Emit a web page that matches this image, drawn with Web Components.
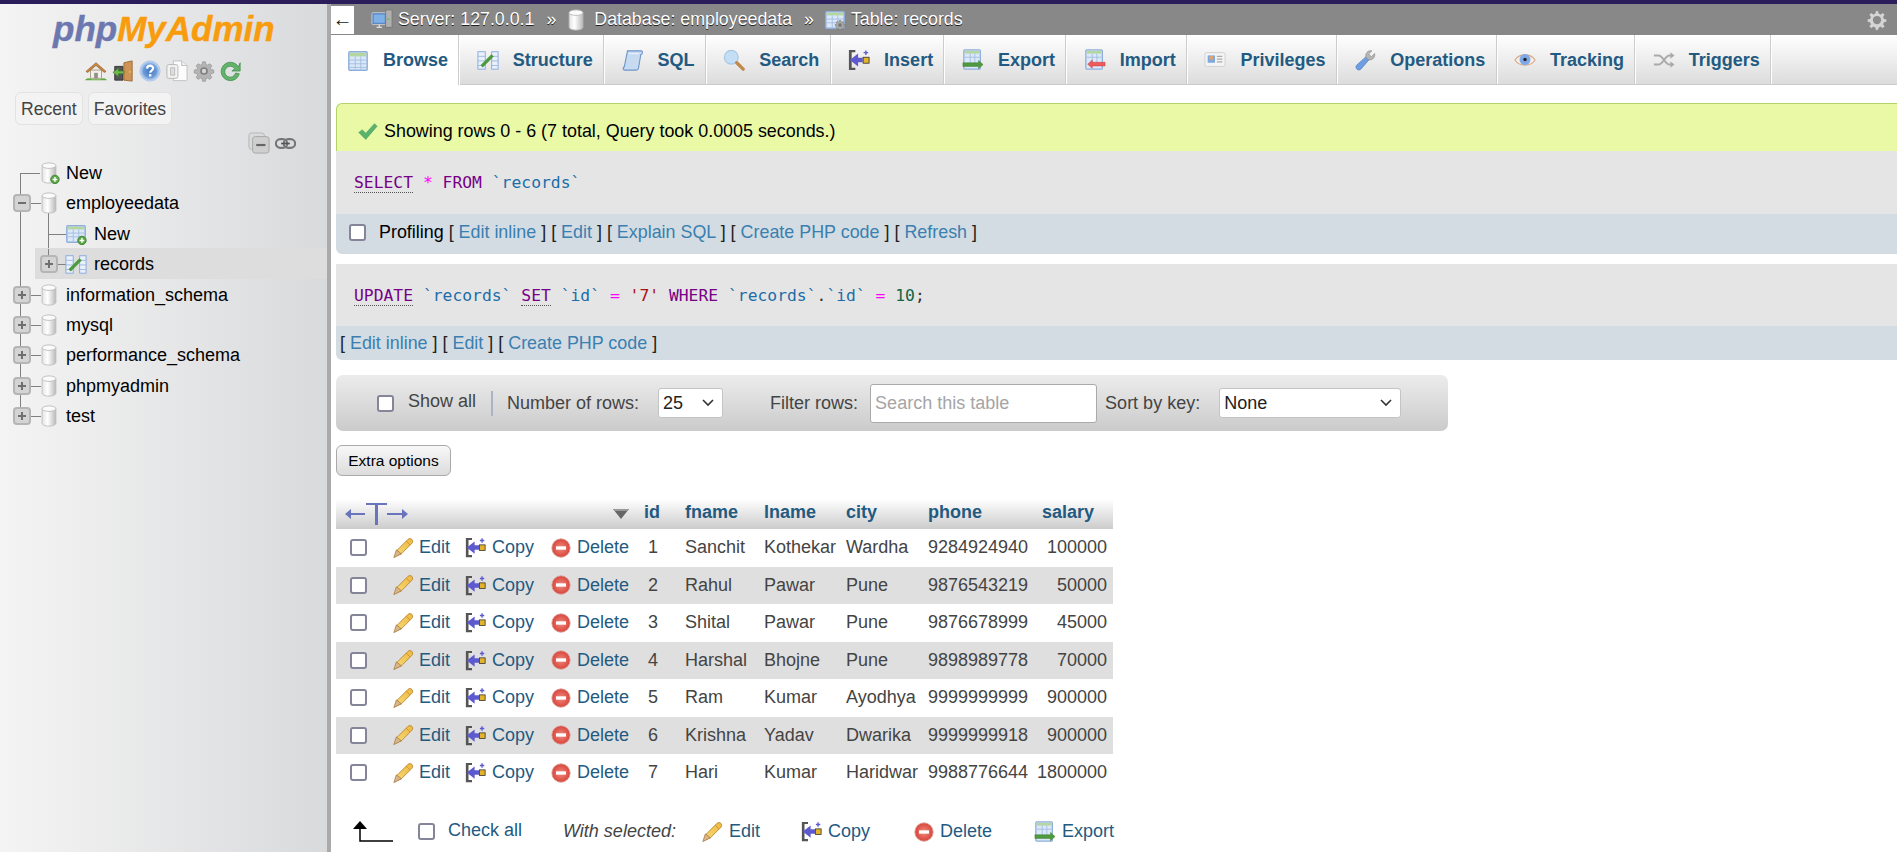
<!DOCTYPE html>
<html>
<head>
<meta charset="utf-8">
<title>phpMyAdmin</title>
<style>
  html, body { margin: 0; padding: 0; background: #fff; font: 18px "Liberation Sans", Arial, sans-serif; overflow: hidden; }
  .kw { color: #770088; }
  .kw.doc { border-bottom: 1px dotted #555; }
  .op { color: #ff00ff; }
  .id { color: #1b6da8; }
  .str { color: #aa1111; }
  .num { color: #116644; }
  .dk { color: #333; }
  .b { color: #222; }
  a { color: #3a7fb0; text-decoration: none; }
</style>
</head>
<body>
<pma-app>
  <pma-sidebar slot="sidebar">
    <pma-tree-item line="first" icon="dbnew">New</pma-tree-item>
    <pma-tree-item line="mid" expander="minus" icon="db" trunk="start">employeedata</pma-tree-item>
    <pma-tree-item line="mid" level="1" icon="tablenew" sub="mid">New</pma-tree-item>
    <pma-tree-item line="mid" level="1" expander="plus" icon="structure" sub="last" active>records</pma-tree-item>
    <pma-tree-item line="mid" expander="plus" icon="db">information_schema</pma-tree-item>
    <pma-tree-item line="mid" expander="plus" icon="db">mysql</pma-tree-item>
    <pma-tree-item line="mid" expander="plus" icon="db">performance_schema</pma-tree-item>
    <pma-tree-item line="mid" expander="plus" icon="db">phpmyadmin</pma-tree-item>
    <pma-tree-item line="last" expander="plus" icon="db">test</pma-tree-item>
  </pma-sidebar>
  <div slot="main">
    <pma-breadcrumb></pma-breadcrumb>
    <pma-tabs>
      <pma-tab icon="browse" active>Browse</pma-tab>
      <pma-tab icon="structure">Structure</pma-tab>
      <pma-tab icon="sql">SQL</pma-tab>
      <pma-tab icon="search">Search</pma-tab>
      <pma-tab icon="insert">Insert</pma-tab>
      <pma-tab icon="export">Export</pma-tab>
      <pma-tab icon="import">Import</pma-tab>
      <pma-tab icon="privs">Privileges</pma-tab>
      <pma-tab icon="ops">Operations</pma-tab>
      <pma-tab icon="eye">Tracking</pma-tab>
      <pma-tab icon="triggers">Triggers</pma-tab>
    </pma-tabs>
    <pma-message>Showing rows 0 - 6 (7 total, Query took 0.0005 seconds.)</pma-message>
    <pma-sql-box height="63" toolsheight="40" pad="13" lift="4">
      <span><span class="kw doc">SELECT</span> <span class="op">*</span> <span class="kw">FROM</span> <span class="id">`records`</span></span>
      <span slot="tools"><pma-check></pma-check><span style="margin-left:13px">Profiling</span> <span class="b">[</span> <a href="#">Edit inline</a> <span class="b">]</span> <span class="b">[</span> <a href="#">Edit</a> <span class="b">]</span> <span class="b">[</span> <a href="#">Explain SQL</a> <span class="b">]</span> <span class="b">[</span> <a href="#">Create PHP code</a> <span class="b">]</span> <span class="b">[</span> <a href="#">Refresh</a> <span class="b">]</span></span>
    </pma-sql-box>
    <pma-sql-box height="62" toolsheight="34" pad="4" style="margin-top:10px">
      <span><span class="kw doc">UPDATE</span> <span class="id">`records`</span> <span class="kw doc">SET</span> <span class="id">`id`</span> <span class="op">=</span> <span class="str">'7'</span> <span class="kw">WHERE</span> <span class="id">`records`</span><span class="dk">.</span><span class="id">`id`</span> <span class="op">=</span> <span class="num">10</span><span class="dk">;</span></span>
      <span slot="tools"><span class="b">[</span> <a href="#">Edit inline</a> <span class="b">]</span> <span class="b">[</span> <a href="#">Edit</a> <span class="b">]</span> <span class="b">[</span> <a href="#">Create PHP code</a> <span class="b">]</span></span>
    </pma-sql-box>
    <pma-nav-bar></pma-nav-bar>
    <pma-extra-button>Extra options</pma-extra-button>
    <pma-results></pma-results>
    <pma-bulk></pma-bulk>
  </div>
</pma-app>

<script>
// icon drawings, all on a 24 box
const DEFS = `<defs>
  <linearGradient id="cyl"><stop offset="0" stop-color="#e4e4e4"/><stop offset=".4" stop-color="#fff"/><stop offset="1" stop-color="#b9b9b9"/></linearGradient>
  <radialGradient id="red"><stop offset="0" stop-color="#f08a80"/><stop offset="1" stop-color="#d8453a"/></radialGradient>
  <radialGradient id="hlp"><stop offset="0" stop-color="#3e74bf"/><stop offset=".65" stop-color="#6c9bd8"/><stop offset="1" stop-color="#cfe0f4"/></radialGradient>
  <linearGradient id="pen" x1="0" y1="1" x2="1" y2="0"><stop offset="0" stop-color="#f7dc7a"/><stop offset="1" stop-color="#eeb73f"/></linearGradient>
</defs>`;
const cyl = `<path d="M4.5 4v16c0 1.600 3.400 3 7.500 3s7.500-1.400 7.500-3V4z" fill="url(#cyl)" stroke="#bcbcbc"/><ellipse cx="12" cy="4" rx="7.500" ry="3" fill="#fbfbfb" stroke="#bcbcbc"/>`;
const plus = `<circle cx="18.500" cy="19" r="4.600" fill="#5aa845" stroke="#3f7f2f"/><path d="M18.500 16.400v5.200M15.900 19h5.200" stroke="#fff" stroke-width="1.600"/>`;
const grid = `<rect x="2" y="3" width="20" height="18" rx="1" fill="#dbe8f8" stroke="#8eaedb" stroke-width="1.600"/><rect x="3" y="4" width="18" height="3" fill="#b4d6a0"/><path d="M3 11h18M3 15h18M9 7v14M15 7v14" stroke="#a3bde0"/>`;
const cogPath = `M10.400 2h3.200l.5 2.800 1.900.8 2.300-1.600 2.300 2.300-1.600 2.300.8 1.900 2.800.5v3.200l-2.800.5-.8 1.900 1.600 2.300-2.300 2.300-2.300-1.600-1.900.8-.5 2.800h-3.200l-.5-2.800-1.900-.8-2.300 1.600-2.300-2.300 1.600-2.300-.8-1.900-2.800-.5v-3.200l2.800-.5.8-1.900-1.600-2.300 2.300-2.300 2.300 1.600 1.900-.8z`;
const ICONS = {
  home: `<path d="M6 11h12v9H6z" fill="#f5f0e6" stroke="#a89880"/><rect x="10" y="14" width="4" height="6" fill="#8f8f8f"/><path d="M1 12.500 12 3l11 9.500-2 1L12 6 3 13.500z" fill="#c98a45" stroke="#8e5a22" stroke-width=".7"/><path d="M0 22c2-2.500 5-2.500 7-1h10c2-1.500 5-1.500 7 1z" fill="#5cab3f"/>`,
  exit: `<path d="M3 7h9v15H3z" fill="#555" stroke="#333"/><path d="M13 3l9-2v22l-9-1z" fill="#cf9455" stroke="#9a6a33"/><path d="M1 13.500 7 9v3h6v3H7v3z" fill="#6dbb4a" stroke="#3f7f2f" stroke-width=".7"/><circle cx="19.500" cy="13" r=".9" fill="#f5d040"/>`,
  help: `<circle cx="12" cy="12" r="11" fill="url(#hlp)" stroke="#aac4e6"/><path d="M8.800 9.400c.2-4.200 6.600-4.200 6.600-.3 0 2.400-3.200 2.400-3.200 4.800" fill="none" stroke="#fff" stroke-width="2.400"/><rect x="10.900" y="15.400" width="2.600" height="2.600" fill="#fff"/>`,
  docs: `<path d="M8 1h9l6 5v15a1.500 1.500 0 0 1-1.500 1.500H8z" fill="#fcfcfc" stroke="#bdbdbd"/><path d="M17 1v5h6" fill="#eee" stroke="#bdbdbd"/><rect x="1" y="5" width="12" height="15" rx="2" fill="#f2f2f2" stroke="#b5b5b5"/><rect x="5" y="8.500" width="4.500" height="8" fill="#ddd" stroke="#bbb"/>`,
  gear: `<path d="${cogPath}" fill="#b4b4b4" stroke="#8e8e8e" stroke-width=".7"/><circle cx="12" cy="12" r="4.200" fill="#7f7f7f"/><circle cx="12" cy="12" r="2.400" fill="#d6d6d6"/>`,
  gearw: `<path d="${cogPath}" fill="#d4d4d4" stroke="#777" stroke-width=".5"/><circle cx="12" cy="12" r="4.500" fill="#8a8a8a"/>`,
  reload: `<path d="M20 7.500A10 10 0 1 0 21 15l-4-.8a6 6 0 1 1-.8-4.700L13 12h9V3z" fill="#63b36a" stroke="#3c8a48" stroke-width=".8"/>`,
  collapse: `<rect x="1" y="1" width="17" height="18" rx="3" fill="#dadada" stroke="#b5b5b5"/><rect x="5" y="5" width="18" height="18" rx="3" fill="#cfcfcf" stroke="#a5a5a5"/><rect x="9" y="13" width="10" height="2.400" fill="#666"/>`,
  link: `<rect x="1" y="7" width="13" height="10" rx="5" fill="none" stroke="#777" stroke-width="2.400"/><rect x="10" y="7" width="13" height="10" rx="5" fill="none" stroke="#777" stroke-width="2.400"/><rect x="7" y="11" width="10" height="2" fill="#555"/>`,
  db: cyl,
  dbnew: cyl + plus,
  tablenew: grid + plus,
  browse: `<rect x="2" y="2" width="20" height="20" rx="1" fill="#dbe8f8" stroke="#8eaedb" stroke-width="1.600"/><rect x="3" y="3" width="18" height="4" fill="#b4d6a0"/><path d="M3 11h18M3 15h18M3 19h18M9 7v14M15 7v14" stroke="#a3bde0"/>`,
  structure: `<rect x="1" y="3" width="8" height="19" fill="#eaf1fb" stroke="#86a8dc"/><rect x="16" y="3" width="7" height="19" fill="#eaf1fb" stroke="#86a8dc"/><path d="M1 8h8M1 13h8M1 18h8M16 8h7M16 13h7M16 18h7" stroke="#9cb8e2"/><path d="M5 19 17 7" stroke="#4d9a3c" stroke-width="3.600"/>`,
  sql: `<path d="M6 2h15c1.800 0 1.800 4-.5 4l-2.500 15c-.3 1.500-1 2-2.500 2H3c-2 0-2.500-3-.5-3.500z" fill="#c6daf2" stroke="#6f94c9" stroke-width="1.200"/><path d="M7.500 5h11" stroke="#eaf2fb" stroke-width="1.200"/>`,
  search: `<circle cx="9" cy="9" r="7.500" fill="#c4def5" stroke="#a9c8e4" stroke-width="1.400"/><path d="M15 15l7 7" stroke="#c08a4c" stroke-width="3.600" stroke-linecap="round"/>`,
  insert: `<path d="M1 1h7v2.500H4v17h4V23H1z" fill="#555"/><path d="M2 12 11 5v4.500h5v5h-5V19z" fill="#5d5ad0"/><rect x="16.500" y="9" width="6.500" height="6.500" fill="#e3b32a" stroke="#333" stroke-width=".9"/><path d="M19.500 1.500v5M17 4h5" stroke="#5d5ad0" stroke-width="1.500"/>`,
  export: `<rect x="2" y="1" width="18" height="21" rx="1" fill="#dbe8f8" stroke="#8eaedb" stroke-width="1.400"/><rect x="3" y="2" width="16" height="3" fill="#b4d6a0"/><path d="M3 9h16M9 5v12M14 5v12" stroke="#a3bde0"/><path d="M1 15h17v-2.500l5 4.500-5 4.500V19H1z" fill="#4f9a3f" stroke="#3a7a2c" stroke-width=".5"/>`,
  import: `<rect x="2" y="1" width="18" height="21" rx="1" fill="#dbe8f8" stroke="#8eaedb" stroke-width="1.400"/><rect x="3" y="2" width="16" height="3" fill="#b4d6a0"/><path d="M3 9h16M9 5v12M14 5v12" stroke="#a3bde0"/><path d="M23 14.500H9V12l-5 4.500 5 4.500v-2.500h14z" fill="#ef5a5a" stroke="#c83a3a" stroke-width=".5"/>`,
  privs: `<rect x="1" y="4" width="22" height="15" rx="1.500" fill="#f4f4f4" stroke="#cfcfcf"/><rect x="4" y="7" width="8" height="8" fill="#7fa8dc"/><circle cx="8" cy="9.500" r="2.200" fill="#e4a36a"/><path d="M14 8h6M14 11h6M14 14h6" stroke="#aaa" stroke-width="1.200"/>`,
  ops: `<path d="M2.500 18 14 7.500l3.500 3L7 22.500c-3 1.500-6-1.500-4.500-4.500z" fill="#6f9fe0" stroke="#527cc0" stroke-width=".7"/><path d="M13 9c-1-4 2-8 6.500-7L16 5.500l3 3L22.500 5c1 4.500-3 8-7 6.500z" fill="#b5b5b5" stroke="#888" stroke-width=".7"/>`,
  eye: `<path d="M1 12C6 4.500 18 4.500 23 12c-5 7.500-17 7.500-22 0z" fill="#f6f0ea" stroke="#dba887" stroke-width="1.300"/><circle cx="12" cy="11.500" r="6" fill="#7ea8e6"/><circle cx="12" cy="11.500" r="1.900" fill="#222"/>`,
  triggers: `<path d="M1 7h5c5 0 7 10 12 10h3M1 17h5c5 0 7-10 12-10h3" fill="none" stroke="#aaa" stroke-width="2.200"/><path d="M19 3.500 23.500 7 19 10.500zM19 13.500l4.500 3.500-4.500 3.500z" fill="#aaa"/>`,
  server: `<rect x="1" y="4" width="16" height="13" rx="1" fill="#5b88c4" stroke="#ccc"/><rect x="3" y="6" width="12" height="9" fill="#7fb0e6"/><path d="M6 20h6M9 17v3" stroke="#ddd" stroke-width="1.500"/><rect x="16" y="1" width="7" height="19" fill="#b0b0b0" stroke="#777"/><rect x="18" y="10" width="2" height="2" fill="#5fbf5f"/>`,
  tablegear: grid + `<path d="${cogPath}" transform="translate(11.500 11.500) scale(.5)" fill="#aaa" stroke="#666"/><circle cx="17.500" cy="17.500" r="2" fill="#777"/>`,
  pencil: `<path d="M3.500 21 6 14 17.500 2.500c1.500-1.200 3.200-.9 4.200.1s1.200 2.700.1 4.200L10.300 18.300z" fill="url(#pen)" stroke="#b5822a" stroke-width=".9"/><path d="M15.500 4.500l4 4" stroke="#c9932c"/><path d="M2 22.500 4.700 14l5.600 4.300z" fill="#dcb684" stroke="#9a6c36" stroke-width=".7"/>`,
  del: `<circle cx="12" cy="12" r="11" fill="url(#red)" stroke="#d9a09a"/><rect x="6" y="10" width="12" height="4" fill="#fff"/>`,
  check: `<path d="M2 13l4-3 4 4L20 3l3 3-13 15z" fill="#59b36d" stroke="#4a9a5c" stroke-width=".6"/>`
};

class PmaIcon extends HTMLElement {
  connectedCallback() {
    const size = this.getAttribute('size') || 22;
    const name = this.getAttribute('name');
    this.attachShadow({ mode: 'open' });
    this.shadowRoot.innerHTML = `<style>:host { display: inline-block; width: ${size}px; height: ${size}px; line-height: 0; flex: none; white-space: normal; } svg { display: block; width: 100%; height: 100%; }</style><svg viewBox="0 0 24 24">${DEFS}${ICONS[name] || ''}</svg>`;
  }
}
customElements.define('pma-icon', PmaIcon);

class PmaCheck extends HTMLElement {
  constructor() {
    super();
    this.attachShadow({ mode: 'open' });
    this.shadowRoot.innerHTML = `<style>
        :host { display: inline-block; width: 17px; height: 17px; vertical-align: -3px; flex: none; white-space: normal; }
        input { display: block; appearance: none; box-sizing: border-box; margin: 0; width: 17px; height: 17px; background: #fff; border: 2px solid #85859a; border-radius: 3px; }
      </style><input type="checkbox">`;
  }
}
customElements.define('pma-check', PmaCheck);

class PmaApp extends HTMLElement {
  constructor() {
    super();
    this.attachShadow({ mode: 'open' });
    this.shadowRoot.innerHTML = `
      <style>
        :host { display: grid; grid-template-columns: 327px 4px 1fr; height: 848px; border-top: 4px solid #2a1d5a; overflow: hidden; }
        .splitter { background: #aaa; }
        .main { min-width: 0; }
      </style>
      <slot name="sidebar"></slot>
      <div class="splitter"></div>
      <div class="main"><slot name="main"></slot></div>`;
  }
}
customElements.define('pma-app', PmaApp);

class PmaSidebar extends HTMLElement {
  constructor() {
    super();
    this.attachShadow({ mode: 'open' });
    this.shadowRoot.innerHTML = `
      <style>
        :host { display: block; height: 848px; background: linear-gradient(to right, #f4f4f4, #d9dadc); }
        .logo { height: 52px; padding-left: 53px; font: italic bold 35px/50px "Liberation Sans", Arial, sans-serif; color: #f89c0e; -webkit-text-stroke: .4px currentColor; white-space: nowrap; }
        .logo span { color: #6c78af; }
        .links { display: flex; margin: 4px 0 0 85px; height: 22px; }
        .links pma-icon { margin-right: 5px; }
        .modes { display: flex; gap: 5px; margin: 10px 0 0 15px; font-size: 17.600px; }
        .modes div { box-sizing: border-box; height: 33px; line-height: 32px; padding: 0 5px; color: #444; background: #f3f3f3; border: 1px solid #e2e2e2; border-radius: 6px; }
        .tools { display: flex; align-items: center; gap: 5px; height: 24px; margin: 6px 0 0 248px; }
        .tree { margin-top: 3px; }
      </style>
      <div class="logo"><span>php</span>MyAdmin</div>
      <div class="links">
        <pma-icon name="home"></pma-icon><pma-icon name="exit"></pma-icon><pma-icon name="help"></pma-icon><pma-icon name="docs"></pma-icon><pma-icon name="gear"></pma-icon><pma-icon name="reload"></pma-icon>
      </div>
      <div class="modes"><div>Recent</div><div>Favorites</div></div>
      <div class="tools"><pma-icon name="collapse"></pma-icon><pma-icon name="link" size="21"></pma-icon></div>
      <div class="tree"><slot></slot></div>`;
  }
}
customElements.define('pma-sidebar', PmaSidebar);

class PmaTreeItem extends HTMLElement {
  connectedCallback() {
    const level = this.getAttribute('level') === '1' ? 1 : 0;
    const expander = this.getAttribute('expander');
    const line = this.getAttribute('line');
    const sub = this.getAttribute('sub');
    const trunk = this.hasAttribute('trunk');
    const icon = this.getAttribute('icon');
    const active = this.hasAttribute('active');
    this.attachShadow({ mode: 'open' });
    const boxX = level ? 40 : 13;
    const iconX = level ? 65 : 38;
    const textX = level ? 94 : 66;
    this.shadowRoot.innerHTML = `
      <style>
        :host { display: block; position: relative; height: 30.400px; color: #000; }
        .hl { position: absolute; left: 35px; right: 0; top: -1px; bottom: 1px; background: #dddddd; display: ${active ? 'block' : 'none'}; }
        .v, .h { position: absolute; background: #808080; }
        .v { width: 1px; }
        .h { height: 1px; top: 15px; }
        .box { position: absolute; left: ${boxX}px; top: 6px; width: 18px; height: 18px; box-sizing: border-box; border: 2px solid #b5b5b5; border-radius: 4px; background: #d4d4d4; }
        .box i { position: absolute; background: #6f6f6f; left: 3px; top: 6px; width: 8px; height: 2px; }
        .box b { position: absolute; background: #6f6f6f; left: 6px; top: 3px; width: 2px; height: 8px; }
        .ic { position: absolute; left: ${iconX}px; top: 4px; }
        .t { position: absolute; left: ${textX}px; top: 0; line-height: 30px; white-space: nowrap; }
      </style>
      <div class="hl"></div>
      <div class="v" style="left:20px;top:${line === 'first' ? 15 : 0}px;height:${line === 'first' ? 16 : line === 'last' ? 15 : 31}px"></div>
      ${level === 0 && !expander ? '<div class="h" style="left:20px;width:20px"></div>' : ''}
      ${level === 0 && expander ? '<div class="h" style="left:31px;width:10px"></div>' : ''}
      ${trunk ? '<div class="v" style="left:48px;top:22px;height:9px"></div>' : ''}
      ${sub ? `<div class="v" style="left:48px;top:0;height:${sub === 'last' ? 6 : 31}px"></div>` : ''}
      ${level === 1 ? `<div class="h" style="left:${expander ? 58 : 48}px;width:${expander ? 8 : 18}px"></div>` : ''}
      ${expander ? `<div class="box"><i></i>${expander === 'plus' ? '<b></b>' : ''}</div>` : ''}
      <pma-icon class="ic" name="${icon}" size="22"></pma-icon>
      <div class="t"><slot></slot></div>`;
  }
}
customElements.define('pma-tree-item', PmaTreeItem);

class PmaBreadcrumb extends HTMLElement {
  constructor() {
    super();
    this.attachShadow({ mode: 'open' });
    this.shadowRoot.innerHTML = `
      <style>
        :host { display: flex; align-items: center; height: 31px; background: #888; color: #fff; font-size: 17.800px; text-shadow: 0 1px 0 #222; white-space: nowrap; }
        .back { width: 23px; height: 28px; margin-top: 1px; background: #fff; color: #222; text-shadow: none; text-align: center; line-height: 26px; font-size: 20px; }
        pma-icon { margin-right: 5px; }
        .sep { margin: 0 10px 0 12px; }
        .cog { margin: 0 9px 0 auto; }
      </style>
      <div class="back">←</div>
      <pma-icon name="server" style="margin-left:17px"></pma-icon><span>Server: 127.0.0.1</span>
      <span class="sep">»</span>
      <pma-icon name="db" style="margin:0 7px 0 -1px"></pma-icon><span>Database: employeedata</span>
      <span class="sep">»</span>
      <pma-icon name="tablegear"></pma-icon><span>Table: records</span>
      <pma-icon class="cog" name="gearw"></pma-icon>`;
  }
}
customElements.define('pma-breadcrumb', PmaBreadcrumb);

class PmaTabs extends HTMLElement {
  constructor() {
    super();
    this.attachShadow({ mode: 'open' });
    this.shadowRoot.innerHTML = `
      <style>:host { display: flex; height: 50px; box-sizing: border-box; border-bottom: 1px solid #ccc; background: linear-gradient(#fff, #dcdcdc); }</style>
      <slot></slot>`;
  }
}
customElements.define('pma-tabs', PmaTabs);

class PmaTab extends HTMLElement {
  connectedCallback() {
    const active = this.hasAttribute('active');
    this.attachShadow({ mode: 'open' });
    this.shadowRoot.innerHTML = `
      <style>
        :host { display: flex; align-items: center; gap: 14px; height: ${active ? 50 : 49}px; box-sizing: border-box; padding: 1px 10.250px 0 ${active ? 16 : 17.5}px; font-weight: bold; color: #235a81; border-right: 1px solid #ccc; box-shadow: 1px 0 0 #fff; ${active ? 'background:#fff;position:relative;' : ''} }
      </style>
      <pma-icon name="${this.getAttribute('icon')}"></pma-icon><slot></slot>`;
  }
}
customElements.define('pma-tab', PmaTab);

class PmaMessage extends HTMLElement {
  constructor() {
    super();
    this.attachShadow({ mode: 'open' });
    this.shadowRoot.innerHTML = `
      <style>
        :host { display: flex; align-items: center; gap: 6px; height: 48px; box-sizing: border-box; margin: 18px 0 0 5px; padding: 7px 0 0 20px; font-size: 17.900px; background: #e9f9a6; border-top: 1px solid #b3d36a; border-left: 1px solid #b3d36a; border-top-left-radius: 6px; color: #000; }
      </style>
      <pma-icon name="check" size="21"></pma-icon><slot></slot>`;
  }
}
customElements.define('pma-message', PmaMessage);

class PmaSqlBox extends HTMLElement {
  connectedCallback() {
    const h = this.getAttribute('height');
    const th = this.getAttribute('toolsheight');
    const pad = this.getAttribute('pad');
    const lift = this.getAttribute('lift') || 0;
    this.attachShadow({ mode: 'open' });
    this.shadowRoot.innerHTML = `
      <style>
        :host { display: block; margin-left: 5px; }
        .code { height: ${h}px; display: flex; align-items: center; padding-left: 18px; background: #e5e5e5; font: 16.350px "DejaVu Sans Mono", monospace; white-space: pre; }
        .tools { height: ${th}px; box-sizing: border-box; display: flex; align-items: center; padding: 0 0 ${lift}px ${pad}px; background: #d3dce3; border-bottom-left-radius: 6px; color: #000; font-size: 17.900px; white-space: pre; }
      </style>
      <div class="code"><slot></slot></div>
      <div class="tools"><slot name="tools"></slot></div>`;
  }
}
customElements.define('pma-sql-box', PmaSqlBox);

// small chevron for the selects, vector only
const CHEVRON = "url(\"data:image/svg+xml,%3Csvg xmlns='http://www.w3.org/2000/svg' width='12' height='8'%3E%3Cpath d='M1 1l5 5 5-5' fill='none' stroke='%23333' stroke-width='1.600'/%3E%3C/svg%3E\")";

class PmaNavBar extends HTMLElement {
  constructor() {
    super();
    this.attachShadow({ mode: 'open' });
    this.shadowRoot.innerHTML = `
      <style>
        :host { display: flex; align-items: center; box-sizing: border-box; width: 1112px; height: 56px; margin: 15px 0 0 5px; padding-left: 41px; color: #444; background: linear-gradient(#ececec, #cbcbcb); border-radius: 7px; white-space: nowrap; }
        select, input[type=text] { box-sizing: border-box; font: 18px "Liberation Sans", Arial, sans-serif; color: #222; background: #fff; border: 1px solid #c4c4c4; border-radius: 3px; }
        select { appearance: none; height: 30px; padding: 0 0 0 4px; background: #fff ${CHEVRON} no-repeat right 8px center; }
        input[type=text] { height: 39px; width: 227px; padding: 0 4px; border-color: #aaa; }
        input::placeholder { color: #a5a5a5; opacity: 1; }
        .sep { width: 2px; height: 25px; background: #a9b4c4; margin: 0 14px 0 15px; }
      </style>
      <pma-check></pma-check>
      <span style="margin:-4px 0 0 14px">Show all</span>
      <div class="sep"></div>
      <span>Number of rows:</span>
      <select style="width:65px;margin-left:19px"><option>25</option></select>
      <span style="margin-left:47px">Filter rows:</span>
      <input type="text" placeholder="Search this table" style="margin-left:12px">
      <span style="margin-left:8px">Sort by key:</span>
      <select style="width:182px;margin-left:19px"><option>None</option></select>`;
  }
}
customElements.define('pma-nav-bar', PmaNavBar);

class PmaExtraButton extends HTMLElement {
  constructor() {
    super();
    this.attachShadow({ mode: 'open' });
    this.shadowRoot.innerHTML = `
      <style>
        :host { display: block; margin: 14px 0 0 5px; }
        button { box-sizing: border-box; width: 115px; height: 31px; padding: 0; font: 15.500px "Liberation Sans", Arial, sans-serif; color: #000; background: linear-gradient(#f8f8f8, #dcdcdc); border: 1px solid #aaa; border-radius: 6px; }
      </style>
      <button><slot></slot></button>`;
  }
}
customElements.define('pma-extra-button', PmaExtraButton);

const ROWS = [
  [1, 'Sanchit', 'Kothekar', 'Wardha', '9284924940', '100000'],
  [2, 'Rahul', 'Pawar', 'Pune', '9876543219', '50000'],
  [3, 'Shital', 'Pawar', 'Pune', '9876678999', '45000'],
  [4, 'Harshal', 'Bhojne', 'Pune', '9898989778', '70000'],
  [5, 'Ram', 'Kumar', 'Ayodhya', '9999999999', '900000'],
  [6, 'Krishna', 'Yadav', 'Dwarika', '9999999918', '900000'],
  [7, 'Hari', 'Kumar', 'Haridwar', '9988776644', '1800000']
];

class PmaResults extends HTMLElement {
  constructor() {
    super();
    this.attachShadow({ mode: 'open' });
    const body = ROWS.map(r => `
      <tr>
        <td style="padding-left:14px"><pma-check style="display:block"></pma-check></td>
        <td><div class="act"><pma-icon name="pencil" size="22"></pma-icon>Edit</div></td>
        <td><div class="act g7"><pma-icon name="insert" size="21"></pma-icon>Copy</div></td>
        <td style="padding-left:7px"><div class="act g6"><pma-icon name="del" size="20"></pma-icon>Delete</div></td>
        <td class="id">${r[0]}</td>
        <td>${r[1]}</td><td>${r[2]}</td><td>${r[3]}</td><td>${r[4]}</td>
        <td class="r">${r[5]}</td>
      </tr>`).join('');
    this.shadowRoot.innerHTML = `
      <style>
        :host { display: block; margin: 23px 0 0 5px; }
        table { border-collapse: collapse; table-layout: fixed; width: 777px; color: #444; }
        th { height: 30px; padding: 0 0 4px 8px; box-sizing: border-box; text-align: left; color: #235a81; font-weight: bold; background: linear-gradient(#fff, #ccc); }
        th[colspan] { padding: 0 0 0 8px; }
        td { height: 37.500px; padding: 0 0 0 8px; white-space: nowrap; box-sizing: border-box; }
        tr:nth-child(even) td { background: #dfdfdf; }
        .act { display: flex; align-items: center; gap: 5px; color: #235a81; }
        .g7 { gap: 6px; } .g6 { gap: 6px; }
        .id { text-align: right; padding: 0 19px 0 0; }
        .r { text-align: right; padding: 0 6px 0 0; }
        .head { display: flex; align-items: center; justify-content: space-between; padding-right: 7px; height: 30px; margin-left: 1px; }
      </style>
      <table>
        <colgroup><col style="width:48px"><col style="width:73px"><col style="width:87px"><col style="width:92px"><col style="width:41px"><col style="width:79px"><col style="width:82px"><col style="width:82px"><col style="width:114px"><col style="width:79px"></colgroup>
        <thead><tr>
          <th colspan="4"><div class="head">
            <svg width="63" height="24" viewBox="0 0 63 24"><g fill="none" stroke="#6a74bc" stroke-width="2"><path d="M2 12h18M42 12h19M21 2h21"/><path d="M31.500 2v21" stroke-width="3"/></g><path d="M0 12l6-5v10zM63 12l-6-5v10z" fill="#6a74bc"/></svg>
            <svg width="16" height="10" viewBox="0 0 16 10"><path d="M0 0h16L8 10z" fill="#666"/><path d="M0 0h16l-2 2H2z" fill="#999"/></svg>
          </div></th>
          <th>id</th><th>fname</th><th>lname</th><th>city</th><th>phone</th><th>salary</th>
        </tr></thead>
        <tbody>${body}</tbody>
      </table>`;
  }
}
customElements.define('pma-results', PmaResults);

class PmaBulk extends HTMLElement {
  constructor() {
    super();
    this.attachShadow({ mode: 'open' });
    this.shadowRoot.innerHTML = `
      <style>
        :host { display: flex; align-items: center; height: 36px; margin: 22px 0 0 22px; color: #235a81; white-space: nowrap; }
        .act { display: inline-flex; align-items: center; gap: 6px; }
        em { color: #444; }
      </style>
      <svg width="40" height="22" viewBox="0 0 40 22"><path d="M7 6v14h33" fill="none" stroke="#000" stroke-width="1.500"/><path d="M0 8 7 0l7 8z" fill="#000"/></svg>
      <pma-check style="margin-left:25px"></pma-check>
      <span style="margin:-2px 0 0 13px">Check all</span>
      <em style="margin-left:41px">With selected:</em>
      <span class="act" style="margin-left:25px"><pma-icon name="pencil" size="22"></pma-icon>Edit</span>
      <span class="act" style="margin-left:41px"><pma-icon name="insert" size="21"></pma-icon>Copy</span>
      <span class="act" style="margin-left:44px"><pma-icon name="del" size="20"></pma-icon>Delete</span>
      <span class="act" style="margin-left:42px"><pma-icon name="export" size="22"></pma-icon>Export</span>`;
  }
}
customElements.define('pma-bulk', PmaBulk);
</script>
</body>
</html>
